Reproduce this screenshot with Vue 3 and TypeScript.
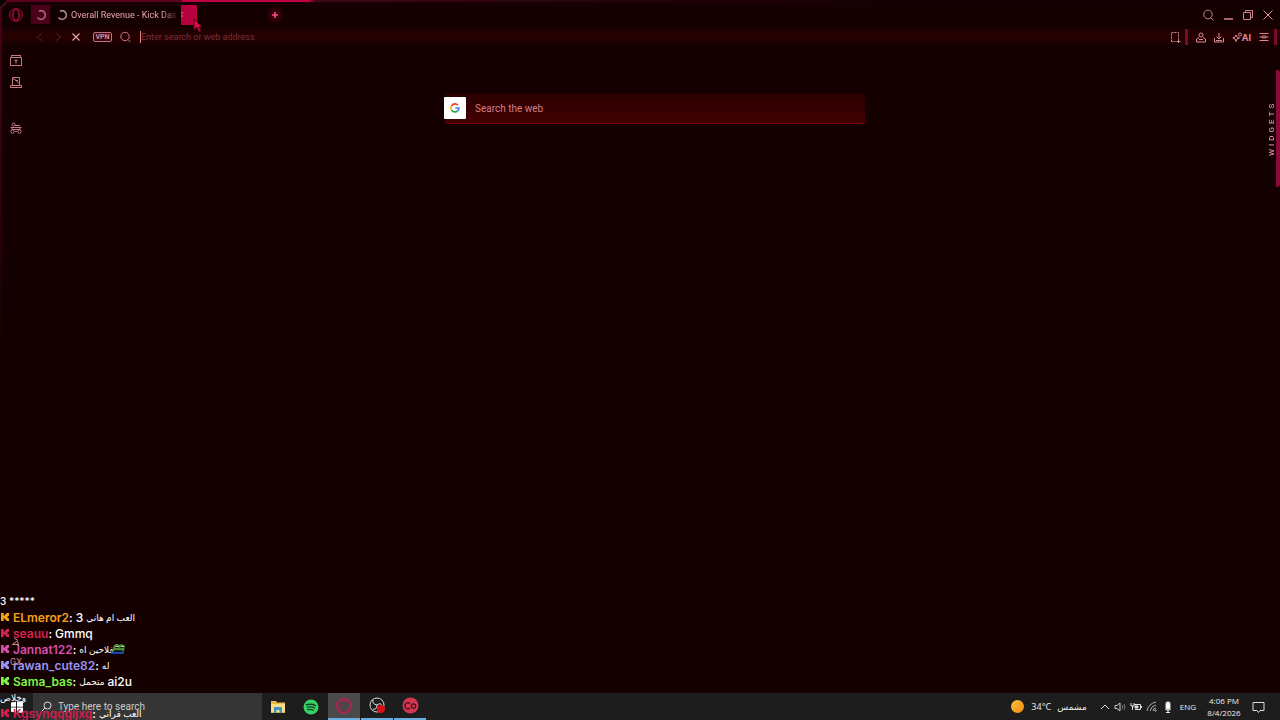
<script setup lang="ts">
interface Part {
  text: string
  arabic?: boolean
}
interface ChatLine {
  name?: string
  color?: string
  parts: Part[]
  emote?: boolean
}

const chat: ChatLine[] = [
  { parts: [{ text: '3 *****' }] },
  { name: 'ELmeror2', color: '#f5a21b', parts: [{ text: '3' }, { text: 'العب ام هاني', arabic: true }] },
  { name: 'seauu', color: '#d9224c', parts: [{ text: 'Gmmq' }] },
  { name: 'Jannat122', color: '#d94fae', parts: [{ text: 'فلاحين اه', arabic: true }], emote: true },
  { name: 'rawan_cute82', color: '#9a94f5', parts: [{ text: 'له', arabic: true }] },
  { name: 'Sama_bas', color: '#7df542', parts: [{ text: 'متحمل', arabic: true }, { text: 'ai2u' }] },
  { parts: [{ text: 'وخلاص', arabic: true }] },
  { name: 'Kgsynqqgijxg', color: '#d31d4e', parts: [{ text: 'العب قراني', arabic: true }] },
]
</script>

<template>
  <div class="screen">
    <header class="tabs">
      <span class="accent"></span>
      <svg class="corner" width="10" height="10" viewBox="0 0 10 10"><path d="M0 0h8L0 8z" fill="#050505" /><path d="M0 8.500L8.500 0" stroke="#6a0a2a" stroke-width="1.500" /></svg>
      <button class="opera" aria-label="Menu">
        <svg width="14" height="14" viewBox="0 0 14 14" fill="none" stroke="#b5133f"><circle cx="7" cy="7" r="6.300" /><ellipse cx="7" cy="7" rx="3" ry="5.500" /><path d="M4.500 2.500Q1.500 7 4.500 11.500M9.500 2.500q3 4.500 0 9" stroke-width=".6" /></svg>
      </button>
      <button class="pinned" aria-label="Pinned tab">
        <svg width="12" height="12" viewBox="0 0 12 12" fill="none" stroke="#b0607c" stroke-width="1.700"><path d="M4 2.200A4.300 4.300 0 1 1 2.500 8.500" /></svg>
      </button>
      <button class="tab">
        <svg width="12" height="12" viewBox="0 0 12 12" fill="none" stroke="#a8848c" stroke-width="1.700"><path d="M4 2.200A4.300 4.300 0 1 1 2.500 8.500" /></svg>
        <span class="title">Overall Revenue - Kick Das</span>
      </button>
      <button class="closetab" aria-label="Close tab"><svg width="3" height="8" viewBox="0 0 3 8" stroke="#ec7aa0"><path d="M1 1v6" stroke-dasharray="2 1" /></svg></button>
      <button class="plus" aria-label="New tab">
        <svg width="8" height="8" viewBox="0 0 8 8" stroke="#f0507c" stroke-width="1.600"><path d="M4 1v6M1 4h6" /></svg>
      </button>
      <div class="winctl">
        <button aria-label="Search tabs"><svg width="12" height="12" viewBox="0 0 12 12" fill="none" stroke="#cf8494"><circle cx="6" cy="5.500" r="4.300" /><path d="M9 9l2.500 2.500" /></svg></button>
        <button aria-label="Minimize"><svg width="12" height="12" viewBox="0 0 12 12" fill="none" stroke="#a86472" stroke-width="2"><path d="M2 10h9" /></svg></button>
        <button aria-label="Restore"><svg width="12" height="12" viewBox="0 0 12 12" fill="none" stroke="#cf8494"><path d="M1.500 3.500h7v7h-7zM3.500 3.500v-2h7v7h-2" /></svg></button>
        <button aria-label="Close"><svg width="12" height="12" viewBox="0 0 12 12" fill="none" stroke="#e296a8"><path d="M1.500 1.500l9 9M10.500 1.500l-9 9" /></svg></button>
      </div>
    </header>

    <nav class="toolbar">
      <button aria-label="Back"><svg width="10" height="10" viewBox="0 0 10 10" fill="none" stroke="#54202a"><path d="M7.500 1L2 5l5.500 4" /></svg></button>
      <button aria-label="Forward"><svg width="10" height="10" viewBox="0 0 10 10" fill="none" stroke="#54202a"><path d="M2.500 1L8 5 2.500 9" /></svg></button>
      <button aria-label="Stop"><svg width="10" height="10" viewBox="0 0 10 10" fill="none" stroke="#e8a0ae" stroke-width="1.200"><path d="M1.500 1.500l7 7M8.500 1.500l-7 7" /></svg></button>
      <button class="vpn">VPN</button>
      <svg class="lens" width="12" height="12" viewBox="0 0 12 12" fill="none" stroke="#d07a88"><circle cx="5" cy="5.500" r="4.200" /><path d="M8.200 8.700l2.300 2.300" /></svg>
      <input class="address" type="text" aria-label="Address" placeholder="Enter search or web address" />
      <button class="snap" aria-label="Snapshot"><svg width="12" height="12" viewBox="0 0 12 12" fill="none" stroke="#d88a98"><path d="M2.500 10.500v-9h7v6M2.500 10.500h4" stroke-dasharray="2 1" /><path d="M9.500 8v4M7.500 10.500h4" /></svg></button>
      <i class="bar"></i>
      <div class="tools">
        <button aria-label="Profile"><svg width="10" height="11" viewBox="0 0 10 11" fill="none" stroke="#d88a98"><circle cx="5" cy="3" r="2" /><path d="M3 5.500L.5 7v3h9V7L7 5.500M3 7.500h4" /></svg></button>
        <button aria-label="Downloads"><svg width="10" height="11" viewBox="0 0 10 11" fill="none" stroke="#d88a98"><path d="M5 1v6M2.500 4.500L5 7l2.500-2.500M.5 6v4h9V6M2 8.500h6" /></svg></button>
        <button class="ai"><svg width="10" height="11" viewBox="0 0 10 11" fill="none" stroke="#d88a98"><path d="M4 3l1 2 2.500 1L5 7 4 9.500 3 7 .8 6 3 5z" /><circle cx="8" cy="2.500" r="1.500" /></svg>AI</button>
        <button aria-label="Easy setup"><svg width="10" height="10" viewBox="0 0 10 10" fill="none" stroke="#d88a98"><path d="M.5 1.500h9M.5 5h3M6 5h3.500M.5 8.500h9M3.500 4h3v2h-3z" /></svg></button>
      </div>
      <i class="bar"></i>
    </nav>

    <main class="body">
      <aside class="side">
        <button aria-label="Pinboard"><svg width="12" height="12" viewBox="0 0 12 12" fill="none" stroke="#c07a86"><path d="M.5 3.500h11v8H.5zM1 1.500h10M1.500 1v2M10.500 1v2M6 5.500v4M4.500 6.500h3" /></svg></button>
        <button aria-label="Player"><svg width="12" height="12" viewBox="0 0 12 12" fill="none" stroke="#c07a86"><path d="M2.500 9V1.500h7V9M.5 9.500h11v2H.5zM3 2.500l3 2 3 3M6 4.500h2" /></svg></button>
        <button class="gap" aria-label="GX Control"><svg width="12" height="12" viewBox="0 0 12 12" fill="none" stroke="#c07a86"><circle cx="3.500" cy="2.500" r="1.500" /><path d="M5 3.500h5M.5 5.500h11M2 5.500v2h8v-2M5 9.500h2" /><circle cx="2.500" cy="9.500" r="1.700" /><circle cx="9.500" cy="9.500" r="1.700" /></svg></button>
        <button class="last" aria-label="Messenger"><svg width="10" height="10" viewBox="0 0 10 10" fill="none" stroke="#c98590"><path d="M3 1l4 2.500L2 7M1 7.500h7M7 5v4" /></svg></button>
        <button class="gx">GX</button>
      </aside>
      <section class="content">
        <form class="search" @submit.prevent>
          <span class="g"><svg width="10" height="10" viewBox="0 0 10 10" fill="none" stroke-width="1.700"><path stroke="#ea4335" d="M8 2.200A4 4 0 0 0 1.500 3" /><path stroke="#fbbc05" d="M1.500 3a4 4 0 0 0 0 4" /><path stroke="#34a853" d="M1.500 7a4 4 0 0 0 6 1" /><path stroke="#4285f4" d="M7.500 8A4 4 0 0 0 9 5H5.200" /></svg></span>
          <input type="text" aria-label="Search the web" placeholder="Search the web" />
        </form>
      </section>
      <button class="widgets">WIDGETS</button>
    </main>

    <footer class="taskbar">
      <button class="start" aria-label="Start"><svg width="12" height="12" viewBox="0 0 12 12" fill="#fff"><path d="M0 1.500l5-.8v5H0zM6 .6L12 0v5.700H6zM0 6.500h5v5L0 10.700zM6 6.500h6V12l-6-.8z" /></svg></button>
      <label class="find"><svg width="11" height="11" viewBox="0 0 11 11" fill="none" stroke="#ddd"><circle cx="6.500" cy="4.500" r="3.500" /><path d="M4 7L1 10" /></svg><input type="text" aria-label="Type here to search" placeholder="Type here to search" /></label>
      <div class="apps">
        <button aria-label="Files"><svg width="16" height="16" viewBox="0 0 16 16"><path fill="#e8b84a" d="M1 2h5l1 1.500h8V14H1z" /><path fill="#f9db86" d="M1 5h14v8H1z" /><path fill="#3e93b8" d="M4 8h8v6h-2.500v-3h-3v3H4z" /></svg></button>
        <button aria-label="Spotify"><svg width="16" height="16" viewBox="0 0 16 16" fill="none" stroke="#173d22" stroke-linecap="round"><circle cx="8" cy="8" r="7.500" fill="#35d366" stroke="none" /><path stroke-width="1.500" d="M3.500 5.800q5-1.500 9 .8" /><path stroke-width="1.200" d="M4 8.300q4-1.200 7.500.7M4.500 10.700q3.300-.9 6 .6" /></svg></button>
        <button class="run active" aria-label="Opera GX"><svg width="18" height="18" viewBox="0 0 18 18" fill="none" stroke="#a02a50"><circle cx="9" cy="9" r="7" stroke-width="2.400" /><ellipse cx="9" cy="9" rx="3.500" ry="5.500" stroke="#7c3048" /></svg></button>
        <button class="run" aria-label="OBS"><svg width="17" height="17" viewBox="0 0 17 17" fill="none" stroke="#ddd"><circle cx="8" cy="8" r="7" fill="#1a1a1a" /><path d="M8 8Q3 7 4 3M8 8q4-3 5 1M8 8q0 5-4 4" /><circle cx="12" cy="12" r="4" fill="#e00c14" stroke="none" /></svg></button>
        <button class="run" aria-label="Connect"><svg width="17" height="17" viewBox="0 0 17 17"><circle cx="8.500" cy="8.500" r="8" fill="#d6354f" /><g fill="none" stroke="#34131b" stroke-width="1.200"><path d="M8 6.500A3 3 0 1 0 8 11" /><circle cx="11.500" cy="9" r="2.200" /></g></svg></button>
      </div>
      <div class="tray">
        <span class="sun"></span><span class="temp">34°C</span><span class="weather">مشمس</span>
        <svg width="10" height="12" viewBox="0 0 10 12" fill="none" stroke="#ddd"><path d="M1 8l4-4 4 4" /></svg>
        <svg width="12" height="12" viewBox="0 0 12 12" fill="none" stroke="#ccc"><path d="M1 4.500h2L6 2v8L3 7.500H1z" /><path d="M8 4q1.500 2 0 4M10 3q2 3 0 6" stroke="#777" /></svg>
        <svg width="12" height="12" viewBox="0 0 12 12" fill="none" stroke="#ddd"><path d="M4 3.500h6.500v5H5M11.500 5v2M1 2v3h3V2M2.500 5v4" /><path d="M5 5h3v2H5z" fill="#ddd" /></svg>
        <svg width="12" height="12" viewBox="0 0 12 12" fill="none" stroke="#aaa"><path d="M1 10Q2 3 10 1M4 10q1-5 6-6M7 10q0-3 3-3" /><circle cx="9.500" cy="9.500" r=".8" /></svg>
        <svg width="12" height="12" viewBox="0 0 12 12" fill="none" stroke="#eee"><rect x="4" y="1" width="4" height="7" rx="1.500" fill="#fff" /><path d="M3 8q3 3 6 0M6 9v3M4 11.500h4" /></svg>
        <span class="lang">ENG</span>
        <span class="clock"><span>4:06 PM</span><span>8/4/2026</span></span>
        <button class="note" aria-label="Notifications"><svg width="13" height="12" viewBox="0 0 13 12" fill="none" stroke="#ddd"><path d="M1 1.500h11v8H8l-1.500 2-1.500-2H1z" /></svg></button>
      </div>
    </footer>

    <ul class="chat">
      <li v-for="(line, i) in chat" :key="i">
        <template v-if="line.name">
          <svg width="8" height="8" viewBox="0 0 9 9" :fill="line.color"><path d="M0 0h3v3h1V2h1V1h1V0h3v3H8v1H7v1h1v1h1v3H6V8H5V7H4V6H3v3H0z" /></svg>
          <span class="who"><b :style="{ color: line.color }">{{ line.name }}</b>:</span>
        </template>
        <span v-for="(part, j) in line.parts" :key="j" :class="{ arabic: part.arabic }">{{ part.text }}</span>
        <svg v-if="line.emote" class="emote" width="14" height="12" viewBox="0 0 14 12"><path fill="#4d8b3c" d="M3 2q3-2 5 0 4-2 6 1l-1 5H1z" /><path fill="#174a9e" d="M0 8q7 2 13 0v3H0z" /><path fill="#b9d0a5" d="M5 3h3v1H5zM10 3h3v1h-3z" /><path fill="#1b2c18" d="M4 4h4v1H4zM9 4h4v1H9zM3 7h8v1H3z" /></svg>
      </li>
    </ul>
    <svg class="cursor" width="10" height="15" viewBox="0 0 10 15"><path fill="#d80a48" stroke="#5e001c" d="M1 1v11l3-3 2 5 2-1-2-4h3z" /></svg>
  </div>
</template>

<style>
body { margin: 0; background: #140000; }
</style>

<style scoped>
.screen { position: relative; display: flex; flex-direction: column; min-height: 100vh; overflow: hidden; background: #140000; color: #d88a98; font-family: Roboto, "DejaVu Sans", sans-serif; font-size: 9px; box-sizing: border-box; }
.screen::before { content: ""; position: absolute; z-index: 1; top: 8px; left: 0; width: 2px; height: 50%; background: linear-gradient(#46001a, #30000e 50%, transparent); }
button { display: flex; align-items: center; justify-content: center; padding: 0; border: 0; background: none; color: inherit; font: inherit; }
input { min-width: 0; padding: 0; border: 0; outline: 0; background: none; color: inherit; font: inherit; }
svg { flex: none; }
.tabs { position: relative; display: flex; align-items: center; height: 29px; padding: 0 6px 0 9px; background: linear-gradient(#1c0006, #120001 30%, #160001); }
.accent { position: absolute; top: 0; left: 8px; right: 0; height: 2px; background: linear-gradient(90deg, #5c0020 0 174px, #c00045 174px 300px, #3c0814 308px, #250408 600px, #140000 900px); }
.corner { position: absolute; left: 0; top: 0; }
.opera { width: 14px; }
.pinned { width: 19px; height: 19px; margin-left: 8px; background: #48001b; }
.tab { gap: 3px; margin-left: 6px; width: 125px; justify-content: flex-start; white-space: nowrap; color: #e8a4b2; }
.title { mask-image: linear-gradient(90deg, #000 86%, transparent 104%); }
.closetab { width: 16px; height: 20px; justify-content: flex-start; background: #b9003f; }
.plus { width: 20px; height: 20px; margin-left: 68px; background: radial-gradient(#4a0014, transparent 70%); }
.winctl { display: flex; gap: 8px; margin-left: auto; }
.toolbar { display: flex; align-items: center; gap: 8px; height: 16px; padding: 0 3px 0 35px; background: linear-gradient(#1a0002, #280000 50%, #180001); }
.vpn { width: 19px; height: 10px; margin-left: 4px; border: 1px solid #c07080; border-radius: 2px; box-sizing: border-box; font-size: 7px; font-weight: 700; background: #3a0710; }
.address { flex: 1; height: 12px; border-left: 1px solid #e08090; }
.address::placeholder { color: #743039; opacity: 1; }
.snap { margin-right: -4px; }
.bar { width: 3px; height: 16px; background: #7a0a2e; }
.toolbar .bar:last-child { margin-left: -3px; }
.tools { display: flex; align-items: center; gap: 8px; }
.ai { font-family: Inter, sans-serif; font-weight: 700; }
.body { position: relative; flex: 1; display: flex; }
.side { position: relative; z-index: 1; display: flex; flex-direction: column; align-items: center; gap: 10px; width: 32px; padding: 9px 0 26px; box-sizing: border-box; }
.gap { margin-top: 24px; }
.last { margin-top: auto; }
.gx { font-size: 9px; line-height: 10px; color: #c98590; }
.content { flex: 1; display: flex; flex-direction: column; align-items: center; padding: 48px 2px 0 0; }
.search { display: flex; align-items: center; gap: 9px; width: 34%; min-width: 300px; max-width: 420px; height: 31px; box-sizing: border-box; background: linear-gradient(#280000, #440003); border-bottom: 1px solid #78000d; border-radius: 3px; }
.g { display: flex; align-items: center; justify-content: center; width: 22px; height: 22px; margin-left: -1px; background: #fff; border-radius: 1px; }
.search input { flex: 1; font-size: 10px; }
.search input::placeholder { color: #d67e84; opacity: 1; }
.widgets { position: absolute; right: 0; top: 25px; width: 14px; height: 117px; border-left: 4px solid #8c0a38; border-radius: 3px 0 0 3px; writing-mode: vertical-rl; transform: rotate(180deg); font-size: 8px; font-weight: 500; letter-spacing: 3px; }
.taskbar { display: flex; align-items: stretch; height: 27px; background: #1d1d1d; font-family: "Open Sans", "DejaVu Sans", sans-serif; color: #eee; }
.start { width: 33px; }
.find { display: flex; align-items: center; gap: 6px; width: 229px; padding-left: 8px; box-sizing: border-box; background: #353535; }
.find input { flex: 1; font-family: Roboto, sans-serif; font-size: 10px; }
.find input::placeholder { color: #ccc; opacity: 1; }
.apps { display: flex; gap: 1px; }
.apps button { width: 32px; box-sizing: border-box; }
.apps .run { border-bottom: 2px solid #68aee0; }
.apps .active { background: #4a4a4a; }
.tray { display: flex; align-items: center; gap: 4px; margin-left: auto; padding-right: 15px; }
.sun { width: 13px; height: 13px; border-radius: 50%; background: linear-gradient(135deg, #ffc13c, #f08a10); }
.temp { margin-left: 3px; font-size: 9px; }
.weather { margin: 0 9px 0 2px; }
.lang { margin-left: 2px; font-size: 8px; }
.clock { display: flex; flex-direction: column; align-items: center; width: 48px; font-size: 8px; line-height: 12px; }
.chat { position: absolute; left: 0; bottom: -1px; margin: 0; padding: 0; list-style: none; color: #fff; font-family: Inter, "DejaVu Sans", sans-serif; font-size: 12px; font-weight: 500; }
.chat li { display: flex; align-items: center; gap: 3px; height: 16px; white-space: nowrap; }
.chat li > svg:first-child { margin: 0 1px; }
.chat li:first-child { font-size: 10px; }
.chat b { font-weight: 600; }
.chat .arabic { font-size: 9px; }
.chat .emote { margin-left: -6px; }
.cursor { position: absolute; left: 193px; top: 18px; }
</style>
